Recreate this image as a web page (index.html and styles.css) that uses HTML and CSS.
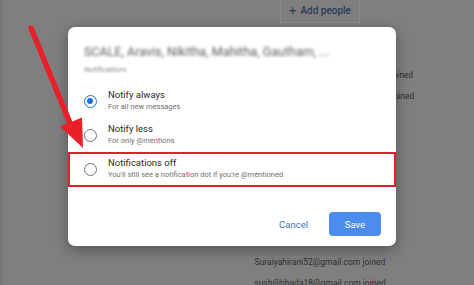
FILE: index.html
```html
<!DOCTYPE html>
<html lang="en">
<head>
    <meta charset="UTF-8">
    <meta name="viewport" content="width=device-width, initial-scale=1.0">
    <title>Notification settings</title>
    <link rel="stylesheet" href="styles.css">
</head>
<body>

    <div class="screen">

        <!-- Room members (dimmed behind the dialog) -->
        <div class="members">
            <div class="add-people"><span class="plus">+</span> Add people</div>
            <div class="log">
                <div>Gauthamkrishnan.official2020@gmail.com joined</div>
                <div>Mahitha.reddy.design2021@gmail.com has joined</div>
                <div class="gap"></div>
                <div class="gap"></div>
                <div class="gap"></div>
                <div class="gap"></div>
                <div class="gap"></div>
                <div class="gap"></div>
                <div>priyanka.rao1996@gmail.com joined</div>
                <div>Suraiyahirani52@gmail.com joined</div>
                <div>sush@bhada18@gmail.com joined</div>
            </div>
        </div>

        <!-- Notification dialog -->
        <div class="dialog">
            <div class="dialog-head">
                <div class="room-name">SCALE, Aravis, Nikitha, Mahitha, Gautham, ...</div>
                <div class="room-sub">Notifications</div>
            </div>

            <div class="option">
                <span class="radio checked"></span>
                <div class="option-text">
                    <div class="option-title">Notify always</div>
                    <div class="option-desc">For all new messages</div>
                </div>
            </div>
            <div class="option">
                <span class="radio"></span>
                <div class="option-text">
                    <div class="option-title">Notify less</div>
                    <div class="option-desc">For only @mentions</div>
                </div>
            </div>
            <div class="option highlight">
                <span class="radio"></span>
                <div class="option-text">
                    <div class="option-title">Notifications off</div>
                    <div class="option-desc">You'll still see a notification dot if you're @mentioned</div>
                </div>
            </div>

            <div class="actions">
                <button class="btn-cancel">Cancel</button>
                <button class="btn-save">Save</button>
            </div>
        </div>

        <!-- Red annotation arrow -->
        <svg class="arrow" width="474" height="285" viewBox="0 0 474 285">
            <line x1="31" y1="28" x2="70" y2="123" stroke="#e8202a" stroke-width="5.5" stroke-linecap="round"/>
            <polygon points="60,126.5 82,117.5 83,148" fill="#e8202a"/>
        </svg>
    </div>

</body>
</html>
```

FILE: styles.css
```css
body {
    margin: 0;
    padding: 0;
    font-family: Roboto, "Noto Sans", sans-serif;
    background-color: #7f7f7f;
}

.screen {
    position: relative;
    width: 474px;
    height: 285px;
    overflow: hidden;
    background-color: #7f7f7f;
    border-left: 3px solid #767676;
    box-sizing: border-box;
}

/* background column */
.members {
    width: 320px;
    margin-left: 157px;
    display: flex;
    flex-direction: column;
    align-items: center;
}

.add-people {
    margin-top: -1px;
    width: 80px;
    height: 24px;
    box-sizing: border-box;
    border: 1px solid #8c8c8c;
    border-top: none;
    display: flex;
    align-items: center;
    justify-content: center;
    font-size: 10px;
    font-weight: 500;
    color: #2c3b57;
}

.plus {
    font-size: 13px;
    font-weight: 400;
    margin-right: 4px;
}

.log {
    margin-top: 42px;
    font-size: 8.5px;
    line-height: 20.8px;
    color: #2e2e2e;
    text-align: center;
    white-space: nowrap;
}

.log .gap {
    height: 20.8px;
}

/* dialog */
.dialog {
    position: absolute;
    left: 65px;
    top: 27px;
    width: 328px;
    height: 219px;
    background-color: #ffffff;
    border-radius: 7px;
    box-shadow: 0 4px 14px rgba(0, 0, 0, 0.35);
    display: flex;
    flex-direction: column;
}

.dialog-head {
    padding: 16px 16px 0;
    height: 57px;
    box-sizing: border-box;
}

.room-name {
    font-size: 12.5px;
    line-height: 18px;
    color: #5a5a5a;
    filter: blur(1.4px);
    white-space: nowrap;
}

.room-sub {
    margin-top: 4px;
    font-size: 7.5px;
    line-height: 10px;
    color: #8a8a8a;
    filter: blur(1px);
}

.option {
    height: 34px;
    box-sizing: border-box;
    border: 2px solid transparent;
    padding-left: 14px;
    display: flex;
    align-items: center;
}

.option.highlight {
    height: 35px;
    border-color: #e41e2b;
}

.radio {
    width: 13px;
    height: 13px;
    box-sizing: border-box;
    border: 1.5px solid #737373;
    border-radius: 50%;
    flex-shrink: 0;
    position: relative;
}

.radio.checked {
    border-color: #1a73e8;
}

.radio.checked::after {
    content: "";
    position: absolute;
    left: 2px;
    top: 2px;
    width: 6px;
    height: 6px;
    border-radius: 50%;
    background-color: #1a73e8;
}

.option-text {
    margin-left: 11px;
    margin-top: -1px;
}

.option-title {
    font-size: 9.5px;
    line-height: 12px;
    color: #2a2a2a;
}

.option-desc {
    font-size: 7.5px;
    line-height: 12px;
    color: #6f6f6f;
    white-space: nowrap;
}

.actions {
    display: flex;
    justify-content: flex-end;
    align-items: center;
    padding: 25px 15px 0 0;
    gap: 11px;
}

.actions button {
    font-family: Roboto, "Noto Sans", sans-serif;
    font-size: 9.5px;
    border: none;
    border-radius: 4px;
    cursor: pointer;
}

.btn-cancel {
    background: none;
    color: #3a6fc4;
    padding: 0 10px;
    height: 24px;
}

.btn-save {
    width: 52px;
    height: 24px;
    background-color: #4a8ded;
    color: #ffffff;
}

.arrow {
    position: absolute;
    left: -3px;
    top: 0;
    pointer-events: none;
}
```
